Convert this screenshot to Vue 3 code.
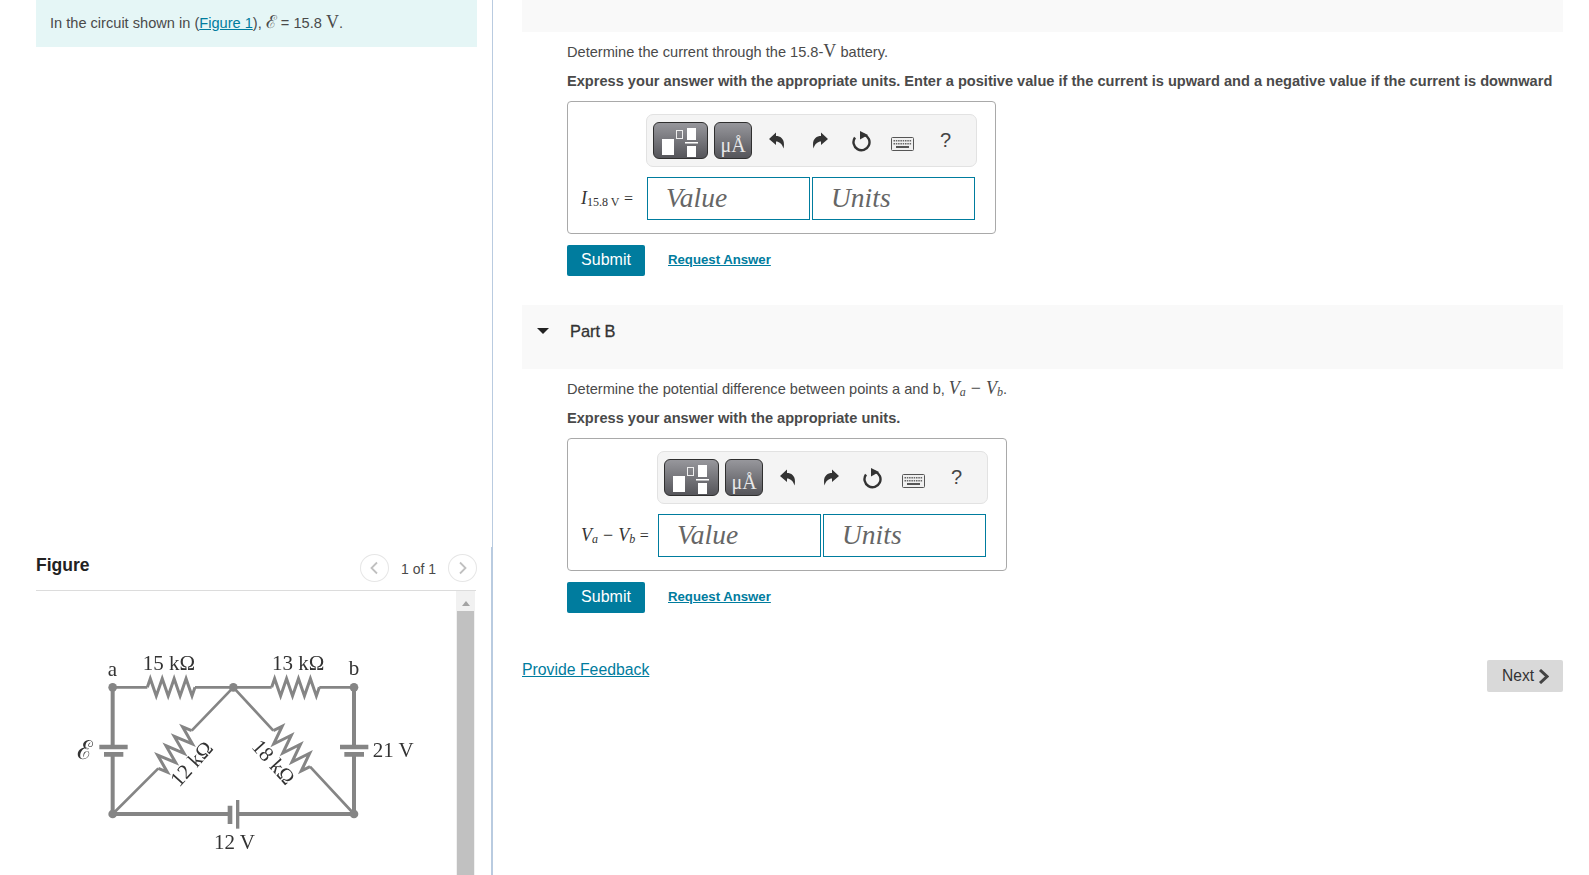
<script setup>
function zig(x1, y1, x2, y2, n, amp) {
  const dx = x2 - x1, dy = y2 - y1, len = Math.hypot(dx, dy)
  const px = -dy / len, py = dx / len
  let d = `M${x1} ${y1}`
  for (let i = 0; i < n; i++) {
    const t = (i + 0.5) / n, s = i % 2 ? -1 : 1
    d += ` L${(x1 + dx * t + px * amp * s).toFixed(1)} ${(y1 + dy * t + py * amp * s).toFixed(1)}`
  }
  return d + ` L${x2} ${y2}`
}
const resistors = [
  zig(262, 142, 405, 142, 8, -26),
  zig(635, 142, 778, 142, 8, -26),
  zig(395, 272, 295, 385, 8, 28),
  zig(640, 272, 750, 380, 8, -28)
]
const dots = [[158, 142], [520, 142], [882, 142], [158, 522], [882, 522]]
const keys = [0, 1, 2, 3, 4, 5, 6, 7]
</script>

<template>
  <div class="page">
    <aside class="left">
      <div class="left-top">
        <div class="intro">
          In the circuit shown in (<a class="link">Figure 1</a>), <span class="math script">ℰ</span> = 15.8 <span class="math big">V</span>.
        </div>
      </div>
      <div class="left-bottom">
        <div class="fig-head">
          <h2>Figure</h2>
          <div class="pager">
            <span class="circle">
              <svg width="10" height="14" viewBox="0 0 10 14"><path d="M8 1.5 L2.5 7 L8 12.5" /></svg>
            </span>
            <span class="count">1 of 1</span>
            <span class="circle">
              <svg width="10" height="14" viewBox="0 0 10 14"><path d="M2 1.5 L7.5 7 L2 12.5" /></svg>
            </span>
          </div>
        </div>
        <div class="fig-body">
          <svg class="circuit" width="380" height="235" viewBox="0 0 1140 705">
            <g fill="none" stroke="#858585" stroke-linejoin="miter">
              <path stroke-width="8" d="M158 142 H262 M405 142 H635 M778 142 H882" />
              <path v-for="r in resistors" :key="r" stroke-width="9" :d="r" />
              <path stroke-width="8" d="M520 142 L395 272 M295 385 L158 522 M520 142 L640 272 M750 380 L882 522" />
              <path stroke-width="12" d="M158 142 V321 M158 343 V522 M882 142 V321 M882 343 V522 M158 522 H510 M532 522 H882" />
              <path stroke-width="13" d="M118 321 H203 M840 321 H925" />
              <path stroke-width="14" d="M132 343 H190 M853 343 H912 M510 497 V552" />
              <path stroke-width="10" d="M533 480 V566" />
            </g>
            <circle v-for="d in dots" :key="d[0] + '-' + d[1]" :cx="d[0]" :cy="d[1]" r="13" fill="#858585" />
            <g class="fig-text">
              <text x="143" y="108">a</text>
              <text x="248" y="90">15 kΩ</text>
              <text x="636" y="90">13 kΩ</text>
              <text x="866" y="106">b</text>
              <text x="938" y="350">21 V</text>
              <text x="462" y="626">12 V</text>
              <text x="0" y="0" text-anchor="middle" transform="translate(410 385) rotate(-48)">12 kΩ</text>
              <text x="0" y="0" text-anchor="middle" transform="translate(625 380) rotate(48)">18 kΩ</text>
              <text class="fig-e" x="50" y="358">ℰ</text>
            </g>
          </svg>
          <div class="scrollbar">
            <span class="scroll-up"></span>
            <span class="thumb"></span>
          </div>
        </div>
      </div>
    </aside>

    <main class="right">
      <div class="band-top"></div>

      <section class="part">
        <p class="q">Determine the current through the 15.8-<span class="math big">V</span> battery.</p>
        <p class="ins">Express your answer with the appropriate units. Enter a positive value if the current is upward and a negative value if the current is downward</p>
        <div class="box box-a">
          <div class="toolbar">
            <span class="tbtn tbtn-frac">
              <svg width="55" height="37" viewBox="0 0 55 37">
                <rect x="9" y="17" width="12" height="16" fill="#fff" />
                <rect x="23.5" y="8.5" width="6" height="8" fill="none" stroke="#eee" />
                <rect x="34" y="6" width="9" height="12" fill="#fff" />
                <rect x="32" y="20" width="13" height="1.5" fill="#fff" />
                <rect x="34" y="24" width="9" height="11" fill="#fff" />
              </svg>
            </span>
            <span class="tbtn tbtn-unit">μÅ</span>
            <span class="tool tool-undo">
              <svg width="16" height="17" viewBox="0 0 16 16"><path d="M0 6.5 L7 0 V12.5 Z M7 3.5 C12 3.5 16.5 7 14.5 16 C13 11 10 9 7 9 Z" /></svg>
            </span>
            <span class="tool tool-redo">
              <svg width="16" height="17" viewBox="0 0 16 16"><path d="M16 6.5 L9 0 V12.5 Z M9 3.5 C4 3.5 -.5 7 1.5 16 C3 11 6 9 9 9 Z" /></svg>
            </span>
            <span class="tool tool-reset">
              <svg width="20" height="21" viewBox="0 0 20 21"><path class="arc" d="M12 3.6 A8 8 0 1 1 3 6.5" /><path d="M8 0 L16 4 L8 8.5 Z" /></svg>
            </span>
            <span class="tool tool-keys">
              <svg width="23" height="14" viewBox="0 0 23 14">
                <rect x=".5" y=".5" width="22" height="13" rx="1" fill="#f0f0f0" stroke="#555" />
                <rect v-for="k in keys" :key="k" :x="2.5 + k * 2.3" y="3" width="1.5" height="1.5" fill="#666" />
                <rect v-for="k in keys" :key="'b' + k" :x="2.5 + k * 2.3" y="6" width="1.5" height="1.5" fill="#666" />
                <rect x="5" y="9" width="13" height="2" fill="#555" />
              </svg>
            </span>
            <span class="tool-q">?</span>
          </div>
          <div class="label label-a"><i>I</i><sub>15.8 V</sub> <span class="eq">=</span></div>
          <div class="inputs">
            <span class="inp">Value</span>
            <span class="inp">Units</span>
          </div>
        </div>
        <div class="actions">
          <button class="submit">Submit</button>
          <a class="req">Request Answer</a>
        </div>
      </section>

      <div class="band-part">
        <span class="caret"></span>
        <span class="part-name">Part B</span>
      </div>

      <section class="part part-b">
        <p class="q">Determine the potential difference between points a and b, <span class="math big"><i>V</i><sub><i>a</i></sub><span class="minus">−</span><i>V</i><sub><i>b</i></sub></span>.</p>
        <p class="ins">Express your answer with the appropriate units.</p>
        <div class="box box-b">
          <div class="toolbar">
            <span class="tbtn tbtn-frac">
              <svg width="55" height="37" viewBox="0 0 55 37">
                <rect x="9" y="17" width="12" height="16" fill="#fff" />
                <rect x="23.5" y="8.5" width="6" height="8" fill="none" stroke="#eee" />
                <rect x="34" y="6" width="9" height="12" fill="#fff" />
                <rect x="32" y="20" width="13" height="1.5" fill="#fff" />
                <rect x="34" y="24" width="9" height="11" fill="#fff" />
              </svg>
            </span>
            <span class="tbtn tbtn-unit">μÅ</span>
            <span class="tool tool-undo">
              <svg width="16" height="17" viewBox="0 0 16 16"><path d="M0 6.5 L7 0 V12.5 Z M7 3.5 C12 3.5 16.5 7 14.5 16 C13 11 10 9 7 9 Z" /></svg>
            </span>
            <span class="tool tool-redo">
              <svg width="16" height="17" viewBox="0 0 16 16"><path d="M16 6.5 L9 0 V12.5 Z M9 3.5 C4 3.5 -.5 7 1.5 16 C3 11 6 9 9 9 Z" /></svg>
            </span>
            <span class="tool tool-reset">
              <svg width="20" height="21" viewBox="0 0 20 21"><path class="arc" d="M12 3.6 A8 8 0 1 1 3 6.5" /><path d="M8 0 L16 4 L8 8.5 Z" /></svg>
            </span>
            <span class="tool tool-keys">
              <svg width="23" height="14" viewBox="0 0 23 14">
                <rect x=".5" y=".5" width="22" height="13" rx="1" fill="#f0f0f0" stroke="#555" />
                <rect v-for="k in keys" :key="k" :x="2.5 + k * 2.3" y="3" width="1.5" height="1.5" fill="#666" />
                <rect v-for="k in keys" :key="'b' + k" :x="2.5 + k * 2.3" y="6" width="1.5" height="1.5" fill="#666" />
                <rect x="5" y="9" width="13" height="2" fill="#555" />
              </svg>
            </span>
            <span class="tool-q">?</span>
          </div>
          <div class="label label-b"><i>V</i><sub><i>a</i></sub><span class="minus">−</span><i>V</i><sub><i>b</i></sub> <span class="eq">=</span></div>
          <div class="inputs">
            <span class="inp">Value</span>
            <span class="inp">Units</span>
          </div>
        </div>
        <div class="actions">
          <button class="submit">Submit</button>
          <a class="req">Request Answer</a>
        </div>
      </section>

      <div class="foot">
        <a class="feedback">Provide Feedback</a>
        <span class="next">Next
          <svg width="11" height="15" viewBox="0 0 11 15"><path d="M2 1 L9 7.5 L2 14" /></svg>
        </span>
      </div>
    </main>
  </div>
</template>

<style>
html, body { margin: 0; background: #fff; overflow: hidden; }
</style>

<style scoped>
.page {
  display: flex;
  width: 1589px;
  height: 875px;
  overflow: hidden;
  font-family: "Liberation Sans", Arial, sans-serif;
  font-size: 14.6px;
  color: #4a4a4a;
  background: #fff;
}
.math { font-family: "Liberation Serif", "DejaVu Serif", serif; }
.big { font-size: 18px; line-height: 0; }
.script { font-size: 18px; line-height: 0; }
.math sub, .label sub { font-size: 12px; line-height: 0; vertical-align: -2px; }
.minus { margin: 0 5px; }
.link { color: #007c9e; text-decoration: underline; }

.left { width: 493px; flex: none; display: flex; flex-direction: column; }
.left-top {
  height: 547px;
  box-sizing: border-box;
  padding: 0 15px 0 36px;
  border-right: 1px solid #b9cbe0;
}
.intro {
  height: 47px;
  box-sizing: border-box;
  padding: 13px 14px 0;
  line-height: 20px;
  background: #e5f6f6;
}
.left-bottom {
  flex: 1;
  min-height: 0;
  box-sizing: border-box;
  padding: 0 15px 0 36px;
  border-right: 2px solid #b9cbe0;
  display: flex;
  flex-direction: column;
}
.fig-head {
  height: 44px;
  flex: none;
  box-sizing: border-box;
  border-bottom: 1px solid #dcdcdc;
  display: flex;
  justify-content: space-between;
  align-items: flex-start;
}
.fig-head h2 {
  margin: 8px 0 0;
  font-size: 17.5px;
  line-height: 20px;
  font-weight: 700;
  color: #222;
}
.pager { display: flex; align-items: center; margin: 7px -1px 0 0; }
.circle {
  width: 27px;
  height: 26px;
  border: 1px solid #e6e6e6;
  border-radius: 50%;
  display: flex;
  align-items: center;
  justify-content: center;
}
.circle svg { fill: none; stroke: #c0c0c0; stroke-width: 1.8; }
.count { margin: 2px 12px 0; font-size: 14px; }
.fig-body { flex: 1; min-height: 0; display: flex; justify-content: space-between; overflow: hidden; }
.circuit {
  margin: 49px 0 0 24px;
  flex: none;
  filter: blur(0.4px);
}
.fig-text text {
  font-family: "Liberation Serif", "DejaVu Serif", serif;
  font-size: 63px;
  fill: #333;
}
.fig-text .fig-e { font-size: 78px; }
.scrollbar {
  width: 19px;
  flex: none;
  margin-right: 1px;
  background: #f1f1f1;
  display: flex;
  flex-direction: column;
  align-items: center;
}
.scroll-up {
  margin: 10px 0 5px;
  width: 0;
  height: 0;
  border-left: 4.5px solid transparent;
  border-right: 4.5px solid transparent;
  border-bottom: 5px solid #a3a3a3;
}
.thumb { width: 17px; flex: 1; background: #c1c1c1; }

.right { flex: 1; min-width: 0; box-sizing: border-box; padding: 0 26px 0 29px; }
.band-top { height: 32px; background: #f9f9f9; }
.part { padding-left: 45px; }
.q { margin: 10px 0 0; line-height: 20px; white-space: nowrap; }
.ins { margin: 9px 0 0; line-height: 20px; font-weight: 700; white-space: nowrap; }
.box {
  margin-top: 10px;
  box-sizing: border-box;
  width: fit-content;
  height: 133px;
  padding: 12px 18px 13px 13px;
  border: 1px solid #a9a9a9;
  border-radius: 4px;
  display: grid;
  column-gap: 0;
  row-gap: 10px;
}
.box-a { grid-template-columns: 65px 331px; }
.box-b { grid-template-columns: 76px 331px; }
.toolbar {
  grid-column: 2;
  height: 53px;
  box-sizing: border-box;
  background: #f4f4f4;
  border: 1px solid #e2e2e2;
  border-radius: 7px;
  display: flex;
  align-items: center;
  padding-left: 6px;
}
.tbtn {
  height: 37px;
  box-sizing: border-box;
  border: 1px solid #2f2f2f;
  border-radius: 6px;
  background: linear-gradient(#97979c, #55555a);
  display: flex;
  align-items: flex-end;
  justify-content: center;
  flex: none;
}
.tbtn-frac { width: 55px; }
.tbtn-frac svg { margin: -1px; }
.tbtn-unit {
  width: 38px;
  margin-left: 6px;
  color: #e8e8e8;
  font-family: "Liberation Serif", serif;
  font-size: 20px;
  line-height: 26px;
}
.tool { display: flex; align-items: center; justify-content: center; flex: none; fill: #333; }
.tool-undo { margin-left: 17px; width: 16px; }
.tool-redo { margin-left: 27px; width: 16px; }
.tool-reset { margin-left: 24px; width: 20px; margin-top: 2px; }
.tool-reset .arc { fill: none; stroke: #333; stroke-width: 2.4; }
.tool-keys { margin-left: 19px; width: 23px; margin-top: 6px; }
.tool-q { margin-left: 26px; font-size: 20px; color: #444; }
.label {
  grid-column: 1;
  font-family: "Liberation Serif", serif;
  font-size: 18px;
  color: #333;
  align-self: center;
  white-space: nowrap;
}
.eq { font-size: 16px; }
.inputs { grid-column: 2; display: flex; gap: 2px; margin-left: 1px; }
.inp {
  width: 163px;
  height: 43px;
  box-sizing: border-box;
  padding-left: 18px;
  border: 1.5px solid #007c9e;
  font-family: "Liberation Serif", serif;
  font-style: italic;
  font-size: 27.5px;
  line-height: 39px;
  color: #666;
}
.actions { margin-top: 11px; display: flex; align-items: center; }
.submit {
  width: 78px;
  height: 31px;
  padding: 0 0 2px;
  border: 0;
  border-radius: 2px;
  background: #007c9e;
  color: #fff;
  font-family: "Liberation Sans", Arial, sans-serif;
  font-size: 16px;
}
.req {
  margin: -2px 0 0 23px;
  font-size: 13.2px;
  font-weight: 700;
  color: #007c9e;
  text-decoration: underline;
}
.band-part {
  margin-top: 29px;
  height: 64px;
  background: #f9f9f9;
  display: flex;
  align-items: flex-start;
}
.caret {
  margin: 23px 0 0 15px;
  width: 0;
  height: 0;
  border-left: 6.5px solid transparent;
  border-right: 6.5px solid transparent;
  border-top: 6.5px solid #222;
}
.part-name {
  margin: 16px 0 0 21px;
  font-size: 16.4px;
  line-height: 20px;
  color: #333;
  -webkit-text-stroke: 0.3px #333;
}
.foot {
  margin-top: 47px;
  display: flex;
  justify-content: space-between;
  align-items: flex-start;
}
.feedback {
  font-size: 15.8px;
  line-height: 19px;
  color: #007c9e;
  text-decoration: underline;
}
.next {
  width: 76px;
  height: 32px;
  box-sizing: border-box;
  padding-left: 15px;
  background: #d9d9d9;
  border-radius: 2px;
  font-size: 15.6px;
  color: #333;
  display: flex;
  align-items: center;
  gap: 4px;
}
.next svg { fill: none; stroke: #444; stroke-width: 3; }
</style>
